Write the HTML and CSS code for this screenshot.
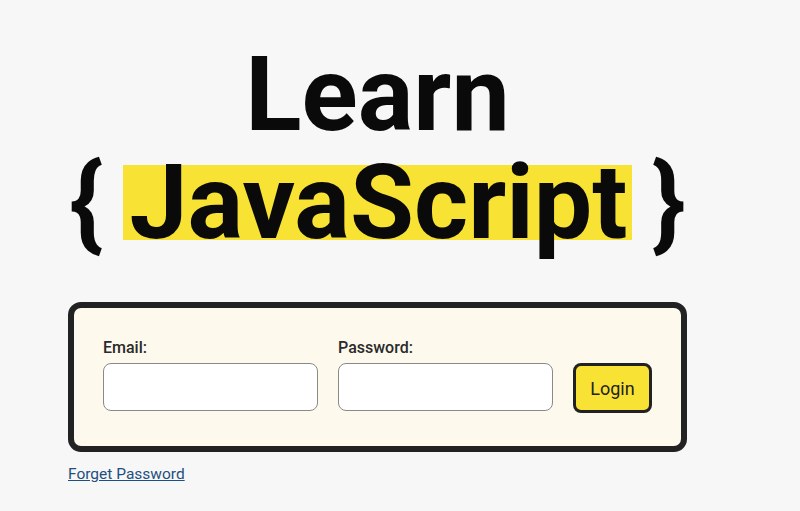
FILE: index.html
```html
<!DOCTYPE html>
<html lang="en">
<head>
<meta charset="utf-8">
<title>Learn JavaScript</title>
<link rel="stylesheet" href="styles.css">
</head>
<body>
<main class="page">
  <h1 class="title">
    <span class="title-line">Learn</span>
    <span class="title-line"><span class="brace">{</span> <span class="mark">JavaScript</span> <span class="brace">}</span></span>
  </h1>
  <form class="login-card">
    <div class="field">
      <label class="label" for="email">Email:</label>
      <input class="input" id="email" type="email">
    </div>
    <div class="field">
      <label class="label" for="password">Password:</label>
      <input class="input" id="password" type="password">
    </div>
    <button class="btn" type="button">Login</button>
  </form>
  <a class="forgot" href="#">Forget Password</a>
</main>
</body>
</html>
```
FILE: styles.css
```css
html, body {
  margin: 0;
  padding: 0;
  background: #f7f7f7;
}
body {
  font-family: Roboto, "Liberation Sans", sans-serif;
  color: #222;
}
.page {
  width: 619px;
  margin-left: 68px;
  padding-top: 41px;
}
.title {
  margin: 0;
  font-family: Roboto, "Liberation Sans", sans-serif;
  font-weight: bold;
  font-size: 104px;
  line-height: 108px;
  text-align: center;
  color: #0a0a0a;
  white-space: nowrap;
}
.title-line {
  display: block;
}
.title-line + .title-line {
  word-spacing: -6px;
}
.brace {
  font-weight: bold;
}
.mark {
  display: inline-block;
  background: #f8e233;
  line-height: 75px;
  padding: 0 4px 0 6px;
  word-spacing: normal;
}
.login-card {
  box-sizing: border-box;
  margin: 45px 0 0 0;
  height: 150px;
  border: 6px solid #222;
  border-radius: 13px;
  background: #fdf9ed;
  padding: 29px 29px 0 29px;
  display: flex;
  align-items: flex-start;
  gap: 20px;
}
.field {
  display: flex;
  flex-direction: column;
  gap: 5px;
}
.label {
  font-size: 16px;
  font-weight: 500;
  color: #2a2a2a;
  line-height: 21px;
}
.input {
  box-sizing: border-box;
  width: 215px;
  height: 48px;
  border: 1.5px solid #8a8a8a;
  border-radius: 8px;
  background: #fff;
  margin: 0;
}
.btn {
  box-sizing: border-box;
  width: 81px;
  height: 50px;
  margin-top: 26px;
  border: 3px solid #222;
  border-radius: 8px;
  background: #f8e233;
  font-family: Roboto, "Liberation Sans", sans-serif;
  font-size: 18px;
  color: #222;
  padding: 0;
}
.forgot {
  display: inline-block;
  margin-top: 13px;
  font-size: 15.5px;
  line-height: 18px;
  color: #1f4f7f;
}
```
